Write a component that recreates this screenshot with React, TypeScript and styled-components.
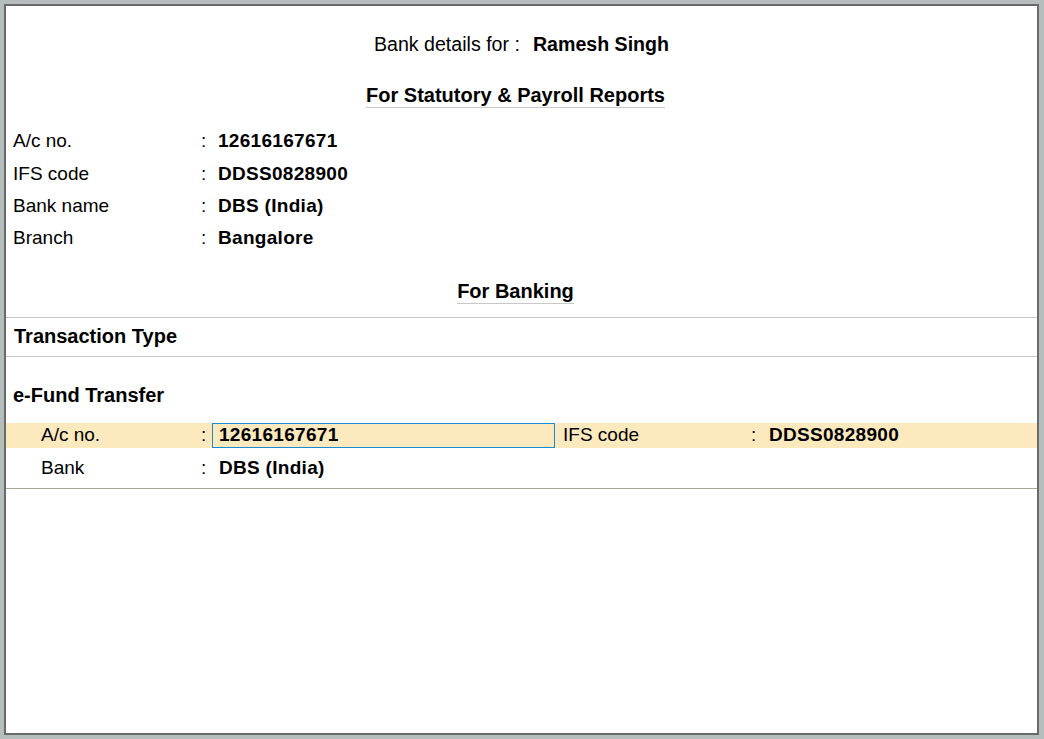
import { createGlobalStyle } from 'styled-components';
import styled, { css } from 'styled-components';

const GlobalStyle = createGlobalStyle`
    html, body {
        margin: 0;
        padding: 0;
        background: #b6bdbd;
    }
    body {
        font-family: 'Liberation Sans', Arial, sans-serif;
        font-size: 19px;
        color: #000;
    }
`;

const Frame = styled.div`
    width: 1044px;
    height: 739px;
    box-sizing: border-box;
    padding: 4px 5px 4px 4px;
    background: #b6bdbd;
`;

const Panel = styled.div`
    height: 100%;
    box-sizing: border-box;
    border: 2px solid #6a6a6a;
    background: #fff;
    display: flex;
    flex-direction: column;
`;

const Title = styled.div`
    margin-top: 26px;
    height: 24px;
    line-height: 24px;
    font-size: 19.6px;
    text-align: center;
    white-space: nowrap;
`;

const TitleName = styled.span`
    margin-left: 13px;
    font-weight: 700;
`;

const SectionHead = styled.div<{ gapTop: number }>`
    margin-top: ${({ gapTop }) => gapTop}px;
    padding-right: 12px;
    display: flex;
    justify-content: center;
`;

const SectionTitle = styled.span`
    font-size: 20px;
    font-weight: 700;
    line-height: 24px;
    border-bottom: 1px solid #c8c8c8;
`;

const InfoList = styled.div`
    margin-top: 17px;
    padding-left: 7px;
    display: flex;
    flex-direction: column;
`;

const InfoRow = styled.div`
    display: grid;
    grid-template-columns: 188px 17px 1fr;
    height: 32.4px;
    align-items: center;
`;

const Value = styled.span`
    font-weight: 700;
    letter-spacing: 0.3px;
`;

const TypeHeader = styled.div`
    margin-top: 13px;
    height: 38px;
    padding-left: 8px;
    display: flex;
    align-items: center;
    font-size: 20px;
    font-weight: 700;
    border-top: 1px solid #c8c8c8;
    border-bottom: 1px solid #c8c8c8;
`;

const GroupTitle = styled.div`
    margin-top: 26px;
    padding-left: 7px;
    line-height: 24px;
    font-size: 20px;
    font-weight: 700;
`;

const FundRow = styled.div<{ active?: boolean; last?: boolean }>`
    display: grid;
    grid-template-columns: 160px 11px 351px 188px 18px 1fr;
    align-items: center;
    padding-left: 35px;
    height: ${({ last }) => (last ? 40 : 25)}px;
    ${({ active }) =>
        active &&
        css`
            margin-top: 16px;
            background: #fde9be;
        `}
    ${({ last }) =>
        last &&
        css`
            border-bottom: 1px solid #a8a89a;
        `}
`;

const FieldBox = styled.div<{ focused?: boolean }>`
    height: 100%;
    box-sizing: border-box;
    display: flex;
    align-items: center;
    padding-left: 6px;
    margin-right: 8px;
    font-weight: 700;
    letter-spacing: 0.3px;
    border: 1px solid ${({ focused }) => (focused ? '#1c8ad0' : 'transparent')};
`;

const info = [
    { label: 'A/c no.', value: '12616167671' },
    { label: 'IFS code', value: 'DDSS0828900' },
    { label: 'Bank name', value: 'DBS (India)' },
    { label: 'Branch', value: 'Bangalore' },
];

export default function App() {
    return (
        <>
            <GlobalStyle />
            <Frame>
                <Panel>
                    <Title>
                        Bank details for :<TitleName>Ramesh Singh</TitleName>
                    </Title>
                    <SectionHead gapTop={27}>
                        <SectionTitle>For Statutory &amp; Payroll Reports</SectionTitle>
                    </SectionHead>
                    <InfoList>
                        {info.map((row) => (
                            <InfoRow key={row.label}>
                                <span>{row.label}</span>
                                <span>:</span>
                                <Value>{row.value}</Value>
                            </InfoRow>
                        ))}
                    </InfoList>
                    <SectionHead gapTop={24}>
                        <SectionTitle>For Banking</SectionTitle>
                    </SectionHead>
                    <TypeHeader>Transaction Type</TypeHeader>
                    <GroupTitle>e-Fund Transfer</GroupTitle>
                    <FundRow active>
                        <span>A/c no.</span>
                        <span>:</span>
                        <FieldBox focused>12616167671</FieldBox>
                        <span>IFS code</span>
                        <span>:</span>
                        <Value>DDSS0828900</Value>
                    </FundRow>
                    <FundRow last>
                        <span>Bank</span>
                        <span>:</span>
                        <FieldBox>DBS (India)</FieldBox>
                    </FundRow>
                </Panel>
            </Frame>
        </>
    );
}
